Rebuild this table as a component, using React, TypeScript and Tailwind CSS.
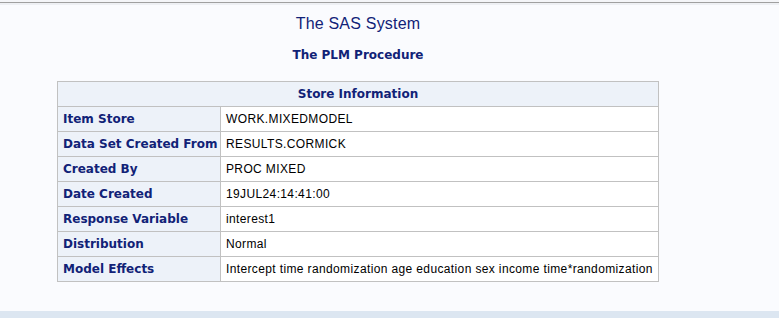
const rows: [string, string][] = [
  ["Item Store", "WORK.MIXEDMODEL"],
  ["Data Set Created From", "RESULTS.CORMICK"],
  ["Created By", "PROC MIXED"],
  ["Date Created", "19JUL24:14:41:00"],
  ["Response Variable", "interest1"],
  ["Distribution", "Normal"],
  ["Model Effects", "Intercept time randomization age education sex income time*randomization"],
];

const labelFont = "font-['DejaVu_Sans',sans-serif] font-bold text-[12px] text-[#112277]";

export default function App() {
  return (
    <div className="flex h-[318px] w-[779px] flex-col bg-[#fafbfe]">
      <div className="h-[2px] bg-[#f4f5f8]" />
      <div className="h-px bg-[#a0a0a0]" />
      <div className="h-[2px] bg-[#eef0f4]" />

      <div className="ml-[57px] flex w-[602px] flex-col">
        <h1 className="mt-[9px] text-center font-['Liberation_Sans',sans-serif] text-[16px] leading-[20px] tracking-[0.2px] text-[#112277]">
          The SAS System
        </h1>
        <h2 className={`mt-[13px] text-center leading-[16px] ${labelFont}`}>
          The PLM Procedure
        </h2>

        {/* Store information table */}
        <table className="mt-[18px] w-full border-collapse border border-[#c1c1c1]">
          <thead>
            <tr>
              <th
                colSpan={2}
                className={`h-[25px] border border-[#c1c1c1] bg-[#edf2f9] p-0 text-center ${labelFont}`}
              >
                Store Information
              </th>
            </tr>
          </thead>
          <tbody>
            {rows.map(([label, value]) => (
              <tr key={label}>
                <th
                  className={`h-[25px] w-[163px] border border-[#c1c1c1] bg-[#edf2f9] py-0 pl-[5px] text-left ${labelFont}`}
                >
                  {label}
                </th>
                <td className="h-[25px] border border-[#c1c1c1] bg-white py-0 pl-[5px] font-['Liberation_Sans',sans-serif] text-[12px] tracking-[0.37px] text-black">
                  {value}
                </td>
              </tr>
            ))}
          </tbody>
        </table>
      </div>

      <div className="flex-1" />
      <div className="h-[7px] bg-[#dce6f1]" />
    </div>
  );
}
